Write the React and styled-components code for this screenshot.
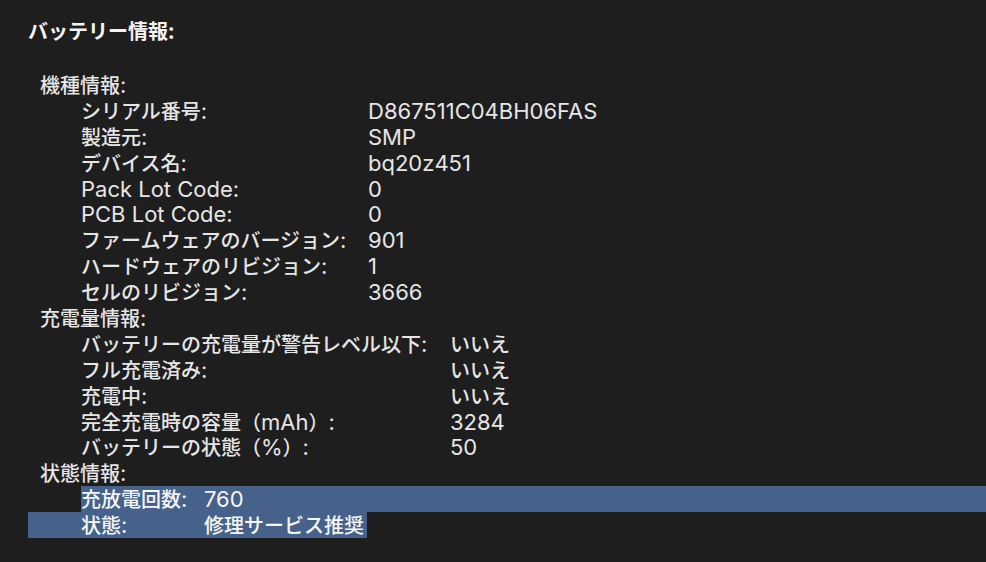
import styled, { createGlobalStyle } from "styled-components"

const GlobalStyle = createGlobalStyle`
  html, body {
    margin: 0;
    padding: 0;
    background: #1e1e1e;
  }
  body {
    width: 986px;
    height: 562px;
    overflow: hidden;
  }
`

const machineInfo = [
  ["シリアル番号:", "D867511C04BH06FAS"],
  ["製造元:", "SMP"],
  ["デバイス名:", "bq20z451"],
  ["Pack Lot Code:", "0"],
  ["PCB Lot Code:", "0"],
  ["ファームウェアのバージョン:", "901"],
  ["ハードウェアのリビジョン:", "1"],
  ["セルのリビジョン:", "3666"],
]

const chargeInfo = [
  ["バッテリーの充電量が警告レベル以下:", "いいえ"],
  ["フル充電済み:", "いいえ"],
  ["充電中:", "いいえ"],
  ["完全充電時の容量（mAh）:", "3284"],
  ["バッテリーの状態（%）:", "50"],
]

const statusInfo = [
  ["充放電回数:", "760", "end"],
  ["状態:", "修理サービス推奨", "start"],
]

// Latin runs are set a little larger, as the system font does beside kana
const Text = ({ children }) =>
  children.split(/([\x20-\x7E]+)/).map((part, i) =>
    /^[\x20-\x7E]+$/.test(part) ? <Latin key={i}>{part}</Latin> : part
  )

const Section = ({ title, rows, labelWidth }) => (
  <SectionBox>
    <SectionTitle><Text>{title}</Text></SectionTitle>
    <Rows>
      {rows.map(([label, value, selection]) => (
        <Row key={label} $selection={selection}>
          <Label $width={labelWidth}><Text>{label}</Text></Label>
          <Value><Text>{value}</Text></Value>
        </Row>
      ))}
    </Rows>
  </SectionBox>
)

export default function App() {
  return (
    <Page>
      <GlobalStyle />
      <Heading>バッテリー情報:</Heading>
      <Section title="機種情報:" rows={machineInfo} labelWidth={287} />
      <Section title="充電量情報:" rows={chargeInfo} labelWidth={369} />
      <Section title="状態情報:" rows={statusInfo} labelWidth={123} />
    </Page>
  )
}

const Page = styled.div`
  padding: 18px 0 0 28px;
  color: #e6e6e6;
  font-family: "Noto Sans CJK JP", sans-serif;
  font-size: 20px;
  font-weight: 500;
  line-height: 25.9px;
`

const Latin = styled.span`
  font-family: Inter, "Liberation Sans", sans-serif;
  font-size: 22px;
  font-weight: 400;
  line-height: 1;
`

const Heading = styled.h1`
  margin: 0 0 28px;
  font-size: 20px;
  font-weight: 700;
  line-height: 26px;
  color: #f4f4f4;
`

const SectionBox = styled.section`
  display: flex;
  flex-direction: column;
`

const SectionTitle = styled.div`
  height: 25.9px;
  padding-left: 12px;
`

const Rows = styled.div`
  display: flex;
  flex-direction: column;
  padding-left: 53px;
`

const Row = styled.div`
  display: flex;
  height: 25.9px;
  background: ${p => (p.$selection ? "#46628a" : "transparent")};
  color: ${p => (p.$selection ? "#f6f6f6" : "inherit")};
  ${p => p.$selection === "start" && `
    margin-left: -53px;
    padding-left: 53px;
    padding-right: 3px;
    width: fit-content;
  `}
`

const Label = styled.span`
  flex: 0 0 ${p => p.$width}px;
  white-space: nowrap;
`

const Value = styled.span`
  white-space: nowrap;
`
